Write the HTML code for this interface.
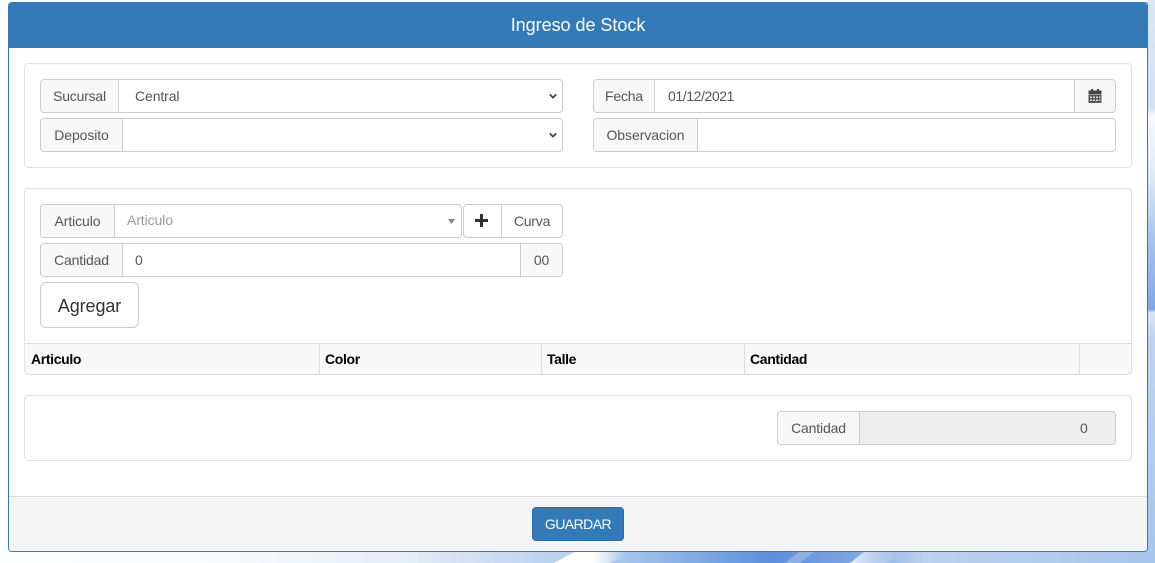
<!DOCTYPE html>
<html lang="es">
<head>
<meta charset="utf-8">
<title>Ingreso de Stock</title>
<style>
html,body{margin:0;padding:0;width:1155px;height:563px;overflow:hidden;background:#fff;}
body{position:relative;font-family:"Liberation Sans",sans-serif;font-size:14px;color:#555;}
*{box-sizing:border-box;}
.abs,.well,.group,.cell{position:absolute;}
.bg{position:absolute;left:0;top:0;}
.panel{position:absolute;left:8px;top:2px;width:1140px;height:550px;background:#fff;border:1px solid #337ab7;border-radius:4px;overflow:hidden;}
.head{position:absolute;left:0;top:0;width:1138px;height:45px;background:#337ab7;color:#fff;font-size:18px;line-height:44px;text-align:center;letter-spacing:-.03px;}
.foot{position:absolute;left:0;top:493px;width:1138px;height:55px;background:#f5f5f5;border-top:1px solid #ddd;}
.well{background:#fff;border:1px solid #e3e3e3;border-radius:4px;box-shadow:inset 0 1px 1px rgba(0,0,0,.03);}
.group{height:34px;border:1px solid #ccc;border-radius:4px;background:#fff;overflow:hidden;line-height:32px;white-space:nowrap;}
.cell{top:0;height:32px;line-height:32px;}
.add{background:#f8f8f8;text-align:center;}
.br{border-right:1px solid #ccc;}
.bl{border-left:1px solid #ccc;}
.chev{position:absolute;top:12px;width:8px;height:8px;}
.btn{position:absolute;background:#fff;border:1px solid #ccc;text-align:center;color:#333;}
.th{position:absolute;top:0;height:30px;line-height:30px;font-weight:bold;color:#000;padding-left:5px;font-size:14px;letter-spacing:-.35px;border-right:1px solid #ddd;}
</style>
</head>
<body>
<svg class="bg" width="1155" height="563" viewBox="0 0 1155 563">
<defs>
<linearGradient id="b" x1="0" y1="0" x2="1155" y2="0" gradientUnits="userSpaceOnUse">
<stop offset="0" stop-color="#fdfeff"/>
<stop offset=".2" stop-color="#f8fafd"/>
<stop offset=".346" stop-color="#e6eef8"/>
<stop offset=".476" stop-color="#bcd3ef"/>
<stop offset=".54" stop-color="#a5c5ea"/>
<stop offset=".667" stop-color="#5a90de"/>
<stop offset=".736" stop-color="#7aa3e0"/>
<stop offset=".8" stop-color="#bcd1f0"/>
<stop offset="1" stop-color="#a9c5ec"/>
</linearGradient>
<linearGradient id="r" x1="0" y1="0" x2="0" y2="563" gradientUnits="userSpaceOnUse">
<stop offset="0" stop-color="#dbe7f5"/>
<stop offset=".19" stop-color="#d2e1f3"/>
<stop offset=".205" stop-color="#f6f9fd"/>
<stop offset=".3" stop-color="#e4edf8"/>
<stop offset=".42" stop-color="#a9c6ec"/>
<stop offset=".55" stop-color="#7ea8e6"/>
<stop offset=".555" stop-color="#dfe6f5"/>
<stop offset=".6" stop-color="#c0d4f0"/>
<stop offset="1" stop-color="#a9c5ec"/>
</linearGradient>
<linearGradient id="w1" x1="554" y1="0" x2="625" y2="0" gradientUnits="userSpaceOnUse">
<stop offset="0" stop-color="#fff"/>
<stop offset=".55" stop-color="#fff"/>
<stop offset="1" stop-color="#fff" stop-opacity="0"/>
</linearGradient>
<linearGradient id="w2" x1="850" y1="0" x2="900" y2="0" gradientUnits="userSpaceOnUse">
<stop offset="0" stop-color="#e6edf8"/>
<stop offset="1" stop-color="#e6edf8" stop-opacity="0"/>
</linearGradient>
</defs>
<rect width="1155" height="563" fill="url(#b)"/>
<polygon points="554,563 576,551 640,551 610,563" fill="url(#w1)"/>
<polygon points="785,563 800,551 815,551 800,563" fill="#a6c2ec" opacity=".6"/>
<polygon points="850,563 865,551 910,551 885,563" fill="url(#w2)"/>
<rect width="1148" height="2" fill="#fff"/>
<rect x="1148" width="7" height="563" fill="url(#r)"/>
</svg>

<div class="panel">
  <div class="head">Ingreso de Stock</div>
  <div class="foot">
    <div class="abs" style="left:523px;top:10px;width:92px;height:34px;background:#337ab7;border:1px solid #2e6da4;border-radius:4px;color:#fff;text-align:center;line-height:32px;font-size:14px;letter-spacing:-.55px;">GUARDAR</div>
  </div>
</div>

<!-- Well 1 -->
<div class="well" style="left:24px;top:63px;width:1108px;height:105px;"></div>

<div class="group" style="left:40px;top:79px;width:523px;">
  <div class="cell add br" style="left:0;width:78px;letter-spacing:-.2px;">Sucursal</div>
  <div class="cell" style="left:94px;letter-spacing:-.1px;">Central</div>
  <svg class="chev" style="left:508px" viewBox="0 0 8 8"><path d="M.8 2.4 L4 5.6 L7.2 2.4" fill="none" stroke="#444" stroke-width="1.8"/></svg>
</div>
<div class="group" style="left:40px;top:118px;width:523px;">
  <div class="cell add br" style="left:0;width:82px;letter-spacing:-.1px;">Deposito</div>
  <svg class="chev" style="left:508px" viewBox="0 0 8 8"><path d="M.8 2.4 L4 5.6 L7.2 2.4" fill="none" stroke="#444" stroke-width="1.8"/></svg>
</div>

<div class="group" style="left:593px;top:79px;width:523px;">
  <div class="cell add br" style="left:0;width:61px;letter-spacing:-.2px;">Fecha</div>
  <div class="cell" style="left:74px;letter-spacing:-.4px;">01/12/2021</div>
  <div class="cell add bl" style="left:480px;width:41px;">
    <svg class="abs" style="left:13px;top:9px" width="14" height="14" viewBox="0 0 14 14"><path d="M3 0h2v2H3zM9 0h2v2H9z" fill="#444"/><rect x="0.5" y="1.5" width="13" height="4" fill="#444"/><rect x="0.5" y="6" width="13" height="8" fill="#555"/><path d="M2 7.5h2v1.5H2zM5 7.5h2v1.5H5zM8 7.5h2v1.5H8zM11 7.5h1.5v1.5H11zM2 10.5h2V12H2zM5 10.5h2V12H5zM8 10.5h2V12H8zM11 10.5h1.5V12H11z" fill="#ddd"/></svg>
  </div>
</div>
<div class="group" style="left:593px;top:118px;width:523px;">
  <div class="cell add br" style="left:0;width:104px;letter-spacing:-.05px;">Observacion</div>
</div>

<!-- Well 2 -->
<div class="well" style="left:24px;top:188px;width:1108px;height:187px;"></div>

<div class="group" style="left:40px;top:204px;width:422px;">
  <div class="cell add br" style="left:0;width:74px;letter-spacing:-.1px;">Articulo</div>
  <div class="cell" style="left:86px;color:#999;top:-1px;letter-spacing:-.1px;">Articulo</div>
  <svg class="abs" style="left:407px;top:14px" width="7" height="5" viewBox="0 0 7 5"><path d="M0 0H7L3.5 5Z" fill="#888"/></svg>
</div>
<div class="btn" style="left:463px;top:204px;width:39px;height:34px;border-radius:4px 0 0 4px;">
  <svg class="abs" style="left:11px;top:9px" width="13" height="13" viewBox="0 0 13 13"><path d="M5 0h3v5h5v3H8v5H5V8H0V5h5z" fill="#2f2f3a"/></svg>
</div>
<div class="btn" style="left:501px;top:204px;width:62px;height:34px;border-radius:0 4px 4px 0;line-height:32px;color:#555;letter-spacing:-.2px;">Curva</div>

<div class="group" style="left:40px;top:243px;width:523px;">
  <div class="cell add br" style="left:0;width:82px;letter-spacing:-.15px;">Cantidad</div>
  <div class="cell" style="left:94px;">0</div>
  <div class="cell add bl" style="left:479px;width:42px;letter-spacing:-.2px;">00</div>
</div>

<div class="btn" style="left:40px;top:282px;width:99px;height:46px;border-radius:6px;font-size:18px;line-height:46px;letter-spacing:-.1px;">Agregar</div>

<div class="abs" style="left:25px;top:343px;width:1106px;height:32px;background:#f8f8f8;border-top:1px solid #ddd;border-bottom:1px solid #ddd;border-radius:0 0 4px 4px;overflow:hidden;">
  <div class="th" style="left:0;width:295px;padding-left:6px;">Articulo</div>
  <div class="th" style="left:295px;width:222px;">Color</div>
  <div class="th" style="left:517px;width:203px;">Talle</div>
  <div class="th" style="left:720px;width:335px;">Cantidad</div>
</div>

<!-- Well 3 -->
<div class="well" style="left:24px;top:395px;width:1108px;height:66px;"></div>
<div class="group" style="left:777px;top:411px;width:339px;background:#eee;">
  <div class="cell add br" style="left:0;width:82px;letter-spacing:-.15px;">Cantidad</div>
  <div class="cell" style="left:302px;">0</div>
</div>
</body>
</html>
